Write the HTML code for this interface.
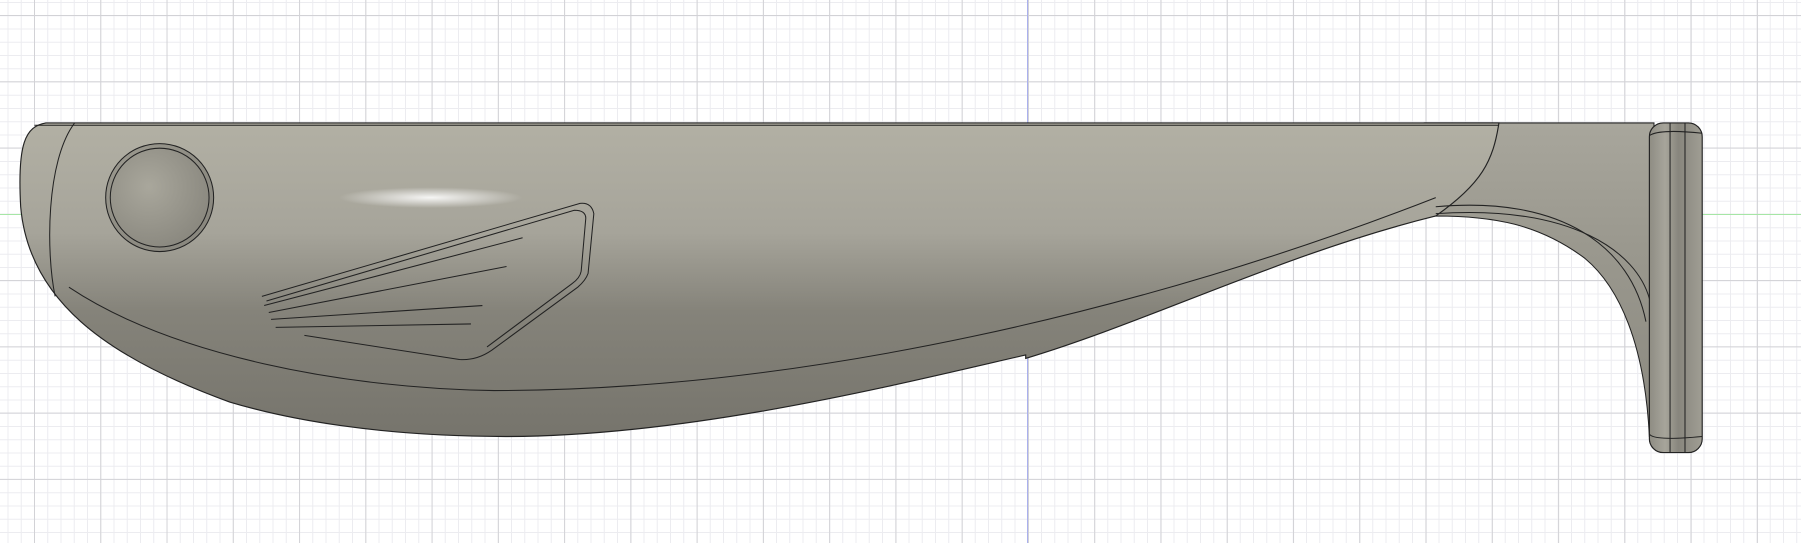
<!DOCTYPE html>
<html><head><style>
html,body{margin:0;padding:0;}
body{width:1801px;height:543px;overflow:hidden;position:relative;background:#fff;
background-image:
linear-gradient(90deg,#d2d2d6 1px,transparent 1px),
linear-gradient(0deg,#d2d2d6 1px,transparent 1px),
linear-gradient(90deg,#ececf0 1px,transparent 1px),
linear-gradient(0deg,#ececf0 1px,transparent 1px);
background-size:66.27px 66.27px,66.27px 66.27px,13.254px 13.254px,13.254px 13.254px;
background-position:34px 0,0 16px,7.5px 0,0 3px;}
svg{position:absolute;left:0;top:0}
</style></head><body>
<div style="position:absolute;left:1027px;top:0;width:1px;height:543px;background:#aab0ee"></div>
<div style="position:absolute;left:0;top:214px;width:1801px;height:1px;background:#a6e6a6"></div>
<svg width="1801" height="543" viewBox="0 0 1568 472.7">
<defs>
<linearGradient id="b" x1="0" y1="0" x2="0" y2="1">
<stop offset="0" stop-color="#b2b0a4"/><stop offset="0.35" stop-color="#a6a49a"/>
<stop offset="0.6" stop-color="#85837a"/><stop offset="1" stop-color="#76746c"/></linearGradient>
<linearGradient id="k" x1="0" y1="0" x2="0" y2="1">
<stop offset="0" stop-color="#a8a69c"/><stop offset="0.4" stop-color="#9a988e"/>
<stop offset="1" stop-color="#8a887f"/></linearGradient>
<linearGradient id="r" x1="0" y1="0" x2="1" y2="0">
<stop offset="0" stop-color="#8e8c83"/><stop offset="0.3" stop-color="#a7a59b"/>
<stop offset="0.55" stop-color="#88867d"/><stop offset="1" stop-color="#a09e94"/></linearGradient>
<radialGradient id="h" cx="0.5" cy="0.5" r="0.5"><stop offset="0" stop-color="#fff" stop-opacity="0.9"/><stop offset="1" stop-color="#fff" stop-opacity="0"/></radialGradient>
<radialGradient id="e" cx="0.4" cy="0.4" r="0.6"><stop offset="0" stop-color="#a9a79c"/><stop offset="1" stop-color="#8a887f"/></radialGradient>
</defs>
<path d="M1240,107 L1440,107 L1440,380 L1436,380 C1432,300 1410,250 1380,225 C1340,195 1300,188 1250,188 C1200,195 1150,210 1100,230 L1240,150 Z" fill="url(#k)" stroke="#222" stroke-width="0.9"/>
<path d="M40,107 L1305,107 C1300,140 1290,160 1250,188 C1120,220 1000,280 893,312 L893,309 C780,335 600,380 440,380 C330,380 250,365 200,350 C90,310 25,260 18,180 C15,125 22,110 40,107 Z" fill="url(#b)" stroke="#222" stroke-width="1"/>
<ellipse cx="375" cy="172" rx="80" ry="9" fill="url(#h)"/>
<rect x="1436" y="107" width="46" height="287" rx="12" fill="url(#r)" stroke="#222" stroke-width="1"/>
<g fill="none" stroke="#222" stroke-width="0.9">
<line x1="1454" y1="107" x2="1454" y2="394"/><line x1="1467" y1="107" x2="1467" y2="394"/>
<path d="M1436,118 Q1445,112 1482,116"/><path d="M1436,378 Q1440,384 1482,380"/>
<path d="M1250,180 C1360,170 1420,215 1433,280"/>
<path d="M1250,186 C1370,178 1425,220 1436,260"/>
<line x1="30" y1="109" x2="1305" y2="109"/>
<path d="M65,107 C40,140 40,220 48,258"/>
<path d="M60,250 C150,310 300,338 430,340 C700,340 1000,270 1250,172"/>
<circle cx="139" cy="172" r="47" fill="url(#e)"/><circle cx="139" cy="172" r="43"/>
<path d="M228,258 L505,177 Q515,176 517,186 L512,238 Q510,244 503,250 L428,305 Q415,314 400,313 L265,292"/>
<path d="M232,262 L500,183 Q510,183 510,190 L506,236 Q505,242 498,247 L424,302"/>
<path d="M230,266 L455,207"/><path d="M234,272 L441,232"/><path d="M236,278 L420,266"/><path d="M240,285 L410,282"/>
</g>
</svg>
</body></html>
